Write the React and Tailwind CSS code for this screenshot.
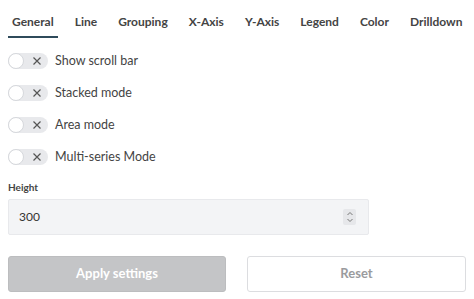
import React from "react";

const tabs = ["General", "Line", "Grouping", "X-Axis", "Y-Axis", "Legend", "Color", "Drilldown"];
const toggles = ["Show scroll bar", "Stacked mode", "Area mode", "Multi-series Mode"];

function Toggle({ label }) {
  return (
    <div className="flex items-center h-[32px]">
      <div className="relative w-[40px] h-[16px] rounded-full bg-[#e8e9ec]">
        <div className="absolute left-0 top-0 w-[16px] h-[16px] rounded-full bg-white border border-[#d6d8dc]" />
        <svg className="absolute left-[24px] top-[3px]" width="10" height="10" viewBox="0 0 10 10">
          <path d="M1.5 1.5 L8.5 8.5 M8.5 1.5 L1.5 8.5" stroke="#555" strokeWidth="1.2" fill="none" />
        </svg>
      </div>
      <span className="ml-[7px] text-[12.5px] text-[#444]">{label}</span>
    </div>
  );
}

export default function App() {
  return (
    <div className="w-[474px] h-[299px] bg-white font-['Lato',sans-serif] overflow-hidden">
      <div className="flex pl-[8px] gap-[13px] pt-[13px]">
        {tabs.map((t, i) => (
          <div
            key={t}
            className={
              "px-[4px] pb-[5px] text-[12px] font-bold text-[#444] border-b-2 " +
              (i === 0 ? "border-[#2f4b5b]" : "border-transparent")
            }
          >
            {t}
          </div>
        ))}
      </div>
      <div className="px-[8px] pt-[7px]">
        {toggles.map((l) => (
          <Toggle key={l} label={l} />
        ))}
        <div className="mt-[7px] text-[10px] font-bold text-[#444] leading-[15px]">Height</div>
        <div className="mt-[4px] w-[361px] h-[36px] bg-[#f3f4f6] border border-[#e8e9ec] rounded-[2px] flex items-center justify-between pl-[10px] pr-[12px]">
          <span className="text-[12px] text-[#333]">300</span>
          <div className="w-[13px] h-[16px] bg-[#e6e7ea] rounded-[2px] flex items-center justify-center">
            <svg width="8" height="12" viewBox="0 0 8 12">
              <path d="M1.5 4 L4 1.5 L6.5 4 M1.5 8 L4 10.5 L6.5 8" stroke="#777" strokeWidth="1" fill="none" />
            </svg>
          </div>
        </div>
        <div className="mt-[21px] flex gap-[21px]">
          <button className="w-[220px] h-[36px] rounded-[3px] bg-[#c4c5c7] border border-[#bcbdbf] text-white text-[13px] font-bold">
            Apply settings
          </button>
          <button className="w-[221px] h-[36px] rounded-[3px] bg-white border border-[#dcdde0] text-[#9a9b9e] text-[13px] font-bold">
            Reset
          </button>
        </div>
      </div>
    </div>
  );
}
